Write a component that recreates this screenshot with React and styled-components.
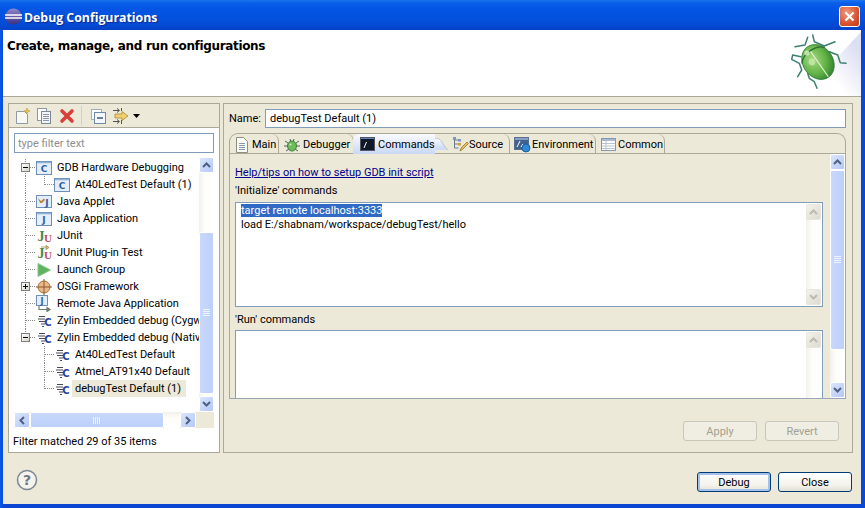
import React from 'react';
import styled, { createGlobalStyle } from 'styled-components';

const Global = createGlobalStyle`
  html, body { margin: 0; padding: 0; background: #0a3fc8; }
  body { font-family: Roboto, "Noto Sans", sans-serif; font-size: 11px; color: #000; }
`;

const Win = styled.div`
  width: 865px;
  height: 508px;
  overflow: hidden;
  display: flex;
  flex-direction: column;
  background: linear-gradient(90deg, #0a5ae8 0, #0a46d2 4px, #0a46d2 861px, #0a4ad8 100%);
`;
const TitleBar = styled.div`
  height: 30px;
  box-sizing: border-box;
  flex: none;
  display: flex;
  align-items: center;
  padding: 3px 5px 0 5px;
  background: linear-gradient(180deg, #1a74f0 0, #0a5fe8 3px, #0456e4 8px, #0350dc 20px, #0342c8 100%);
  color: #fff;
`;
const TitleText = styled.div`
  margin-left: 2px;
  padding-top: 1px;
  font: bold 12.3px "Open Sans", "DejaVu Sans", sans-serif;
  text-shadow: 1px 1px 1px #0a2a90;
  flex: 1;
`;
const CloseBtn = styled.div`
  width: 21px;
  height: 21px;
  box-sizing: border-box;
  border: 1px solid #fff;
  border-radius: 3px;
  background: radial-gradient(circle at 35% 30%, #ee9a80, #d8532f 60%, #bb3a17);
  display: flex;
  align-items: center;
  justify-content: center;
`;
const Body = styled.div`
  flex: 1;
  margin: 0 4px 4px 3px;
  min-height: 0;
  background: #ece9d8;
  display: flex;
  flex-direction: column;
`;
const Header = styled.div`
  height: 66px;
  flex: none;
  background: #fff;
  border-bottom: 1px solid #aca899;
  display: flex;
  justify-content: space-between;
`;
const HeaderText = styled.div`
  font: bold 12px "DejaVu Sans", sans-serif;
  letter-spacing: -0.34px;
  padding: 9px 0 0 4px;
`;
const Panes = styled.div`
  height: 350px;
  flex: none;
  display: flex;
  gap: 3px;
  padding: 6px 8px 0 5px;
`;
const Panel = styled.div`
  box-sizing: border-box;
  border: 1px solid #aca899;
  height: 350px;
  display: flex;
  flex-direction: column;
  width: ${p => p.$w}px;
  background: #ece9d8;
`;
const ToolBar = styled.div`
  height: 23px;
  flex: none;
  background: #ece9d8;
  border-bottom: 1px solid #aca899;
  display: flex;
  align-items: center;
  padding-left: 5px;
  gap: 3px;
`;
const ToolItem = styled.div`
  display: flex;
  align-items: center;
  margin-left: ${p => p.$left || 0}px;
`;
const ToolSep = styled.div`
  width: 1px;
  height: 19px;
  background: #d4d0bf;
  margin: 0 5px 0 3px;
`;
const LeftBody = styled.div`
  flex: 1;
  background: #fff;
  display: flex;
  flex-direction: column;
  padding: 5px 5px 0;
  min-height: 0;
`;
const FilterInput = styled.div`
  height: 20px;
  flex: none;
  box-sizing: border-box;
  border: 1px solid #7f9db9;
  color: #8e8e8e;
  display: flex;
  align-items: center;
  padding-left: 3px;
`;
const TreeWrap = styled.div`
  height: 255px;
  flex: none;
  margin-top: 4px;
  display: flex;
`;
const Tree = styled.div`
  flex: 1;
  min-width: 0;
  overflow: hidden;
  padding-top: 2px;
`;
const Row = styled.div`
  height: 17px;
  display: flex;
  align-items: center;
  white-space: nowrap;
  padding-left: 2px;
`;
const Guide = styled.div`
  width: ${p => p.$w}px;
  height: 17px;
  flex: none;
  position: relative;
  display: flex;
  align-items: center;
  justify-content: center;
  ${p => p.$v && `
    &::before {
      content: '';
      position: absolute;
      left: 9px;
      top: 0;
      height: ${p.$v === 'half' ? '9px' : '17px'};
      border-left: 1px dotted #8a8a8a;
    }
  `}
  ${p => p.$h && `
    &::after {
      content: '';
      position: absolute;
      left: 10px;
      top: 8px;
      width: 9px;
      border-top: 1px dotted #8a8a8a;
    }
  `}
`;
const Expander = styled.div`
  width: 9px;
  height: 9px;
  box-sizing: border-box;
  border: 1px solid #808080;
  background: linear-gradient(135deg, #fff, #d8d4c8);
  position: relative;
  z-index: 1;
  display: flex;
  align-items: center;
  justify-content: center;
  svg { display: block; }
`;
const NodeIcon = styled.div`
  width: 17px;
  height: 17px;
  flex: none;
  display: flex;
  align-items: center;
  justify-content: center;
`;
const NodeLabel = styled.div`
  margin-left: 2px;
  padding: 1px 3px;
  line-height: 13px;
  ${p => p.$selected && 'background: #ece9d8; padding: 2px 5px 2px 3px;'}
`;
const Bar = styled.div`
  flex: ${p => (p.$grow ? 1 : 'none')};
  display: flex;
  flex-direction: ${p => (p.$horizontal ? 'row' : 'column')};
  ${p => (p.$horizontal ? 'height: 16px;' : 'width: 15px;')}
  background: ${p => p.$horizontal
    ? 'linear-gradient(180deg, #f3f1ec, #fdfdfa 40%, #fff)'
    : 'linear-gradient(90deg, #f3f1ec, #fdfdfa 40%, #fff)'};
`;
const BarBtn = styled.div`
  width: ${p => (p.$horizontal ? '16px' : '15px')};
  height: 16px;
  flex: none;
  box-sizing: border-box;
  border: 1px solid ${p => (p.$off ? '#e8e6dc' : '#fff')};
  border-radius: 2px;
  background: ${p => (p.$off ? 'linear-gradient(135deg, #f4f3ec, #dcdad0)' : 'linear-gradient(135deg, #dbe6fd, #b4c8f6)')};
  display: flex;
  align-items: center;
  justify-content: center;
`;
const Thumb = styled.div`
  box-sizing: border-box;
  flex: none;
  border: 1px solid #fff;
  border-radius: 2px;
  ${p => (p.$horizontal ? `width: ${p.$len}px; height: 16px;` : `height: ${p.$len}px; width: 15px;`)}
  background: ${p => p.$horizontal
    ? 'linear-gradient(180deg, #c9d8fc, #bcd0fa)'
    : 'linear-gradient(90deg, #c9d8fc, #bcd0fa)'};
  display: flex;
  align-items: center;
  justify-content: center;
`;
const Track = styled.div`
  flex: ${p => (p.$len ? `0 0 ${p.$len}px` : 1)};
`;
const HBarRow = styled.div`
  height: 16px;
  flex: none;
  background: #ece9d8;
  display: flex;
`;
const HBarFill = styled.div`
  width: ${p => p.$w}px;
  flex: none;
`;
const StatusText = styled.div`
  padding-top: 7px;
  margin-left: -1px;
  line-height: 13px;
`;
const NameRow = styled.div`
  flex: none;
  display: flex;
  align-items: center;
  height: 19px;
  margin: 5px 6px 0 5px;
`;
const NameLabel = styled.div`
  width: 36px;
`;
const NameInput = styled.div`
  flex: 1;
  height: 19px;
  box-sizing: border-box;
  border: 1px solid #7f9db9;
  background: #fff;
  display: flex;
  align-items: center;
  padding-left: 4px;
`;
const Folder = styled.div`
  box-sizing: border-box;
  height: 266px;
  flex: none;
  margin: 5px 6px 0 5px;
  border: 1px solid #aca899;
  border-bottom-color: #9aa6b6;
  border-radius: 9px 9px 0 0;
  display: flex;
  flex-direction: column;
  overflow: hidden;
`;
const TabStrip = styled.div`
  height: 19px;
  flex: none;
  display: flex;
  border-bottom: 1px solid #aca899;
`;
const Tab = styled.div`
  box-sizing: border-box;
  width: ${p => p.$w}px;
  flex: none;
  height: 19px;
  display: flex;
  align-items: center;
  gap: ${p => (p.$gap === undefined ? 3 : p.$gap)}px;
  padding: 2px 0 0 ${p => (p.$pad === undefined ? 5 : p.$pad)}px;
  border-right: 1px solid #aca899;
  border-top-right-radius: 7px;
`;
const ActiveTab = styled.div`
  width: ${p => p.$w}px;
  flex: none;
  height: 20px;
  display: flex;
  align-items: center;
  margin-left: -1px;
`;
const ActiveLabel = styled.div`
  flex: 1;
  height: 20px;
  display: flex;
  align-items: center;
  gap: 3px;
  padding-left: 7px;
  border-top-left-radius: 6px;
  background: linear-gradient(180deg, #fafbfe, #c9d8f5);
`;
const FolderBody = styled.div`
  flex: 1;
  min-height: 0;
  display: flex;
`;
const Commands = styled.div`
  flex: 1;
  min-width: 0;
  padding: 12px 7px 0 5px;
  overflow: hidden;
`;
const HelpLink = styled.div`
  color: #00008b;
  text-decoration: underline;
  line-height: 13px;
`;
const FieldLabel = styled.div`
  margin-top: ${p => p.$top}px;
  line-height: 13px;
  height: 13px;
`;
const TextBox = styled.div`
  box-sizing: border-box;
  margin-top: ${p => p.$top}px;
  height: ${p => p.$h}px;
  border: 1px solid #7f9db9;
  padding: 1px;
  background: #fff;
  display: flex;
  overflow: hidden;
`;
const TextLines = styled.div`
  flex: 1;
  padding-left: 4px;
  line-height: 14px;
`;
const Selected = styled.span`
  background: #316ac5;
  color: #fff;
`;
const ButtonRow = styled.div`
  display: flex;
  justify-content: flex-end;
  gap: 8px;
  padding-right: ${p => p.$right}px;
  margin-top: ${p => p.$top}px;
`;
const Btn = styled.div`
  width: 74px;
  height: 20px;
  box-sizing: border-box;
  border-radius: 3px;
  display: flex;
  align-items: center;
  justify-content: center;
  border: 1px solid ${p => (p.$off ? '#c9c7ba' : '#003c74')};
  color: ${p => (p.$off ? '#a1a192' : '#000')};
  background: ${p => (p.$off ? '#f0eee2' : 'linear-gradient(180deg, #fff, #f3f2ea 70%, #e2dfd2)')};
  ${p => p.$def && 'box-shadow: inset 0 0 0 2px #a6c0ec;'}
`;
const Footer = styled.div`
  flex: 1;
  display: flex;
  align-items: flex-start;
  justify-content: space-between;
  padding: 16px 9px 0 13px;
`;
const FooterBtns = styled.div`
  display: flex;
  gap: 7px;
  padding-top: 3px;
`;

const Up = ({ c = '#4d6185' }) => <svg width="9" height="6" viewBox="0 0 9 6"><path d="M1 5l3.500-3.500L8 5" fill="none" stroke={c} strokeWidth="2" /></svg>;
const Down = ({ c = '#4d6185' }) => <svg width="9" height="6" viewBox="0 0 9 6"><path d="M1 1l3.500 3.500L8 1" fill="none" stroke={c} strokeWidth="2" /></svg>;
const Left = () => <svg width="6" height="9" viewBox="0 0 6 9"><path d="M5 1L1.500 4.500 5 8" fill="none" stroke="#4d6185" strokeWidth="2" /></svg>;
const Right = () => <svg width="6" height="9" viewBox="0 0 6 9"><path d="M1 1l3.500 3.500L1 8" fill="none" stroke="#4d6185" strokeWidth="2" /></svg>;
const GripV = () => <svg width="7" height="8" viewBox="0 0 7 8"><path d="M0 .5h7M0 2.500h7M0 4.500h7M0 6.500h7" stroke="#eef3fe" /></svg>;
const GripH = () => <svg width="8" height="7" viewBox="0 0 8 7"><path d="M.5 0v7M2.500 0v7M4.500 0v7M6.500 0v7" stroke="#eef3fe" /></svg>;

const EclipseIcon = () => (
  <svg width="17" height="17" viewBox="0 0 17 17">
    <defs>
      <linearGradient id="ecl" x1="0" y1="0" x2="0" y2="1">
        <stop offset="0" stopColor="#8f88c8" />
        <stop offset="1" stopColor="#3a2f80" />
      </linearGradient>
    </defs>
    <circle cx="8.500" cy="8.500" r="8" fill="url(#ecl)" />
    <path d="M0 7h17M0 10h17" stroke="#fff" strokeWidth="1.400" />
  </svg>
);

const CfgC = () => (
  <svg width="16" height="16" viewBox="0 0 16 16">
    <rect x=".5" y="1.500" width="15" height="13" fill="#e4eefc" stroke="#6d8fb5" />
    <path d="M1 2.500h14" stroke="#8fb0d4" strokeWidth="1.500" />
    <text x="8" y="12" textAnchor="middle" fontFamily="DejaVu Sans" fontWeight="bold" fontSize="9" fill="#2f5f9e">C</text>
  </svg>
);
const CfgJ = () => (
  <svg width="16" height="16" viewBox="0 0 16 16">
    <rect x=".5" y="1.500" width="15" height="13" fill="#e4eefc" stroke="#6d8fb5" />
    <path d="M1 2.500h14" stroke="#8fb0d4" strokeWidth="1.500" />
    <text x="8" y="12" textAnchor="middle" fontFamily="DejaVu Sans" fontWeight="bold" fontSize="9" fill="#2f5f9e">J</text>
  </svg>
);
const Applet = () => (
  <svg width="16" height="16" viewBox="0 0 16 16">
    <rect x=".5" y="1.500" width="15" height="12" fill="#e4eefc" stroke="#6d8fb5" />
    <path d="M2 4l3 3 3-2.500 1 1.500-3 3H4z" fill="#b8863c" />
    <text x="11" y="12" textAnchor="middle" fontFamily="DejaVu Sans" fontWeight="bold" fontSize="9" fill="#2f5f9e">J</text>
  </svg>
);
const JUnit = ({ plug }) => (
  <svg width="16" height="17" viewBox="0 0 16 17">
    <text x="5" y="14" textAnchor="middle" fontFamily="Liberation Serif" fontWeight="bold" fontSize="14" fill="#3f8b4a">J</text>
    <text x="12" y="15" textAnchor="middle" fontFamily="Liberation Serif" fontWeight="bold" fontSize="11" fill="#c8465a">U</text>
    {plug && <path d="M5 3h5M10 1.500l3 2-3 2z" fill="#e8c76a" stroke="#9a8a50" strokeWidth=".8" />}
  </svg>
);
const Launch = () => (
  <svg width="16" height="16" viewBox="0 0 16 16"><path d="M2 1.500L14.500 8 2 14.500z" fill="#5cb55c" stroke="#8bc28b" /></svg>
);
const Osgi = () => (
  <svg width="16" height="16" viewBox="0 0 16 16">
    <circle cx="8" cy="8" r="6" fill="#e8b888" stroke="#a86d36" />
    <path d="M8 0v16M0 8h16" stroke="#8a5a30" />
  </svg>
);
const Remote = () => (
  <svg width="16" height="17" viewBox="0 0 16 17">
    <rect x=".5" y=".5" width="11" height="10" fill="#e4eefc" stroke="#6d8fb5" />
    <text x="6" y="9" textAnchor="middle" fontFamily="DejaVu Sans" fontWeight="bold" fontSize="8" fill="#2f5f9e">J</text>
    <path d="M3 11v3.500h10M11 12.500l3 2-3 2z" fill="none" stroke="#707a70" strokeWidth="1.200" />
  </svg>
);
const Zylin = () => (
  <svg width="16" height="14" viewBox="0 0 16 14">
    <path d="M3 2.500h6M2 5h7M3 7.500h6M5 10h4M6 12.500h2" stroke="#444a58" />
    <text x="12" y="11.500" textAnchor="middle" fontFamily="DejaVu Sans" fontWeight="bold" fontSize="10" fill="#2c3f9e">C</text>
  </svg>
);

const NewCfg = () => (
  <svg width="18" height="18" viewBox="0 0 18 18">
    <path d="M2.500 4.500h8l3 3v9h-11z" fill="#f8f8f2" stroke="#8f9aa6" />
    <path d="M13 1l.8 2.200L16 4l-2.200.8L13 7l-.8-2.200L10 4l2.200-.8z" fill="#f0c840" stroke="#b09030" strokeWidth=".5" />
  </svg>
);
const Dup = () => (
  <svg width="18" height="18" viewBox="0 0 18 18">
    <rect x="2.500" y="1.500" width="9" height="12" fill="#fff" stroke="#8f9aa6" />
    <rect x="6.500" y="4.500" width="9" height="12" fill="#f2f4f8" stroke="#7d8796" />
    <path d="M8 7.500h6M8 9.500h6M8 11.500h6M8 13.500h6" stroke="#8898b0" />
  </svg>
);
const RedX = () => (
  <svg width="16" height="16" viewBox="0 0 16 16">
    <path d="M3 3l10 10M13 3L3 13" stroke="#d8403c" strokeWidth="3.600" strokeLinecap="round" />
  </svg>
);
const Collapse = () => (
  <svg width="16" height="16" viewBox="0 0 16 16">
    <rect x="1.500" y="1.500" width="10" height="10" fill="#fff" stroke="#9db0c4" />
    <rect x="4.500" y="4.500" width="11" height="11" fill="#f4f7fb" stroke="#6d8aa8" />
    <path d="M7 10h6" stroke="#3a5a80" strokeWidth="1.500" />
  </svg>
);
const FilterIcon = () => (
  <svg width="18" height="18" viewBox="0 0 18 18">
    <path d="M1 3.500h6M5 1.500l2.500 2-2.500 2M1 14.500h6M5 12.500l2.500 2-2.500 2M9.500 1v3M9.500 13v4" stroke="#555" fill="none" />
    <path d="M3 7h7V4.500L16 9l-6 4.500V11H3z" fill="#f0cf70" stroke="#a88a30" strokeWidth=".8" />
  </svg>
);
const MenuCaret = () => (
  <svg width="7" height="4" viewBox="0 0 7 4"><path d="M0 0h7L3.500 4z" fill="#000" /></svg>
);

const PageIcon = () => (
  <svg width="14" height="16" viewBox="0 0 14 16">
    <path d="M1.500.5h7l4 4v11h-11z" fill="#fbfbf6" stroke="#8d8d80" />
    <path d="M4 6.500h6M4 8.500h6M4 10.500h6M4 12.500h6" stroke="#8898b0" />
  </svg>
);
const TinyBug = () => (
  <svg width="16" height="16" viewBox="0 0 16 16">
    <path d="M1 4l3 2M15 4l-3 2M0 9h3M16 9h-3M2 14l3-2M14 14l-3-2M6 2l1 3M10 2L9 5" stroke="#46665a" />
    <ellipse cx="8" cy="9" rx="4.500" ry="5" fill="#6dbb5a" stroke="#3d7d3a" />
    <circle cx="6.500" cy="7.500" r="1" fill="#d6f0c8" />
  </svg>
);
const Term = () => (
  <svg width="15" height="14" viewBox="0 0 15 14">
    <rect x=".5" y=".5" width="14" height="13" fill="#101828" stroke="#556" />
    <path d="M1 1.500h13" stroke="#5d80c0" />
    <path d="M4 11l2.500-6" stroke="#fff" />
  </svg>
);
const SourceIcon = () => (
  <svg width="17" height="17" viewBox="0 0 17 17">
    <path d="M2.500 1v11M2.500 4h4M2.500 8h4M2.500 12h4" stroke="#6a7a90" />
    <rect x="1" y="1" width="3" height="3" fill="#7d97c0" />
    <rect x="6" y="3" width="3" height="2.500" fill="#7d97c0" />
    <rect x="6" y="7" width="3" height="2.500" fill="#c8a050" />
    <path d="M8 15l1-3 6-6 1.500 1.500-6 6z" fill="#e0bd60" stroke="#8a6d20" strokeWidth=".7" />
  </svg>
);
const EnvIcon = () => (
  <svg width="17" height="16" viewBox="0 0 17 16">
    <rect x=".5" y=".5" width="14" height="12" fill="#41618f" stroke="#5b6f8f" />
    <path d="M1 2h13" stroke="#9eb6d8" strokeWidth="1.500" />
    <path d="M3 10l3-6M7 10l2-3" stroke="#fff" />
    <circle cx="12" cy="11" r="4" fill="#2c8ad8" stroke="#1e5f9e" />
  </svg>
);
const TableIcon = () => (
  <svg width="15" height="13" viewBox="0 0 15 13">
    <rect x=".5" y=".5" width="14" height="12" fill="#fff" stroke="#8898ac" />
    <path d="M1 2h13" stroke="#a8bad0" strokeWidth="2" />
    <path d="M1 5.500h13M1 8h13M1 10.500h13M5 3v9" stroke="#b6c4d4" />
  </svg>
);
const TabCurve = () => (
  <svg width="23" height="20" viewBox="0 0 23 20">
    <defs>
      <linearGradient id="tabg" x1="0" y1="0" x2="0" y2="1">
        <stop offset="0" stopColor="#fafbfe" />
        <stop offset="1" stopColor="#c9d8f5" />
      </linearGradient>
    </defs>
    <path d="M0 0h3C9 0 11 5 14 10s5 9 9 10H0z" fill="url(#tabg)" />
    <path d="M0 .5h3C9 .5 11 5 14 10s5 9 9 9.500" fill="none" stroke="#9fa7b8" />
  </svg>
);

const Beetle = () => (
  <svg width="71" height="66" viewBox="789 30 71 66">
    <defs>
      <linearGradient id="corner" x1="0.3" y1="0.9" x2="1" y2="0.3">
        <stop offset="0.3" stopColor="#fff" />
        <stop offset="1" stopColor="#dcdef2" />
      </linearGradient>
      <radialGradient id="shell" cx="0.4" cy="0.35" r="0.8">
        <stop offset="0" stopColor="#a8d884" />
        <stop offset="0.55" stopColor="#5fb144" />
        <stop offset="1" stopColor="#1f6a2c" />
      </radialGradient>
    </defs>
    <path d="M860 32V96H800z" fill="url(#corner)" />
    <g fill="none" stroke="#3d7f70" strokeWidth="1.500" strokeLinejoin="round" strokeLinecap="round">
      <path d="M811.700 35l1.600 6.700 10 4.300 10.700-4.300" />
      <path d="M806.700 37.300L804 45l-10 1.700" />
      <path d="M828.300 51.700l8.400 3.300 2.600 7.700 5.700.6" />
      <path d="M800 56.700l-8.300-1.700-1 4.300 7.600 4 2.400 6.700-4 6.700" />
      <path d="M806.700 73.300l1.600 5 5 3.400 2.700 6.600" />
    </g>
    <g transform="rotate(-35 817 62)">
      <ellipse cx="817" cy="62" rx="15" ry="18.500" fill="url(#shell)" stroke="#2f7f38" strokeWidth=".8" />
      <path d="M817 49v31" stroke="#dff3cc" strokeWidth="1.200" />
      <path d="M803 54a16 11 0 0 1 28 0" fill="none" stroke="#2c6e34" strokeWidth="1.400" />
    </g>
    <circle cx="806" cy="53" r="2.600" fill="#d8f2c2" opacity=".8" />
    <circle cx="811" cy="62" r="3.400" fill="#cdeeb4" opacity=".7" />
  </svg>
);

const HelpIcon = () => (
  <svg width="22" height="22" viewBox="0 0 22 22">
    <circle cx="11" cy="11" r="9.500" fill="#f4f3ec" stroke="#7f8a96" strokeWidth="1.600" />
    <text x="11" y="16" textAnchor="middle" fontFamily="DejaVu Sans" fontWeight="bold" fontSize="14" fill="#6d7884">?</text>
  </svg>
);

const treeRows = [
  { label: 'GDB Hardware Debugging', icon: <CfgC />, g: [{ v: 'full', exp: 'minus', h: true }] },
  { label: 'At40LedTest Default (1)', icon: <CfgC />, g: [{ v: 'full' }, { v: 'half', h: true }] },
  { label: 'Java Applet', icon: <Applet />, g: [{ v: 'full', h: true }] },
  { label: 'Java Application', icon: <CfgJ />, g: [{ v: 'full', h: true }] },
  { label: 'JUnit', icon: <JUnit />, g: [{ v: 'full', h: true }] },
  { label: 'JUnit Plug-in Test', icon: <JUnit plug />, g: [{ v: 'full', h: true }] },
  { label: 'Launch Group', icon: <Launch />, g: [{ v: 'full', h: true }] },
  { label: 'OSGi Framework', icon: <Osgi />, g: [{ v: 'full', exp: 'plus', h: true }] },
  { label: 'Remote Java Application', icon: <Remote />, g: [{ v: 'full', h: true }] },
  { label: 'Zylin Embedded debug (Cygwin)', icon: <Zylin />, g: [{ v: 'full', h: true }] },
  { label: 'Zylin Embedded debug (Native)', icon: <Zylin />, g: [{ v: 'half', exp: 'minus', h: true }] },
  { label: 'At40LedTest Default', icon: <Zylin />, g: [{}, { v: 'full', h: true }] },
  { label: 'Atmel_AT91x40 Default', icon: <Zylin />, g: [{}, { v: 'full', h: true }] },
  { label: 'debugTest Default (1)', icon: <Zylin />, g: [{}, { v: 'half', h: true }], selected: true },
];

const VScroll = ({ before, len, off }) => (
  <Bar>
    <BarBtn $off={off}><Up c={off ? '#bdbbaf' : undefined} /></BarBtn>
    {before > 0 && <Track $len={before} />}
    {len > 0 && <Thumb $len={len}><GripV /></Thumb>}
    <Track />
    <BarBtn $off={off}><Down c={off ? '#bdbbaf' : undefined} /></BarBtn>
  </Bar>
);

export default function App() {
  return (
    <Win>
      <Global />
      <TitleBar>
        <EclipseIcon />
        <TitleText>Debug Configurations</TitleText>
        <CloseBtn>
          <svg width="11" height="11" viewBox="0 0 11 11"><path d="M1.500 1.500l8 8M9.500 1.500l-8 8" stroke="#fff" strokeWidth="2.200" /></svg>
        </CloseBtn>
      </TitleBar>
      <Body>
        <Header>
          <HeaderText>Create, manage, and run configurations</HeaderText>
          <Beetle />
        </Header>
        <Panes>
          <Panel $w={212}>
            <ToolBar>
              <NewCfg />
              <Dup />
              <ToolItem $left={3}><RedX /></ToolItem>
              <ToolSep />
              <Collapse />
              <ToolItem $left={3}><FilterIcon /></ToolItem>
              <MenuCaret />
            </ToolBar>
            <LeftBody>
              <FilterInput>type filter text</FilterInput>
              <TreeWrap>
                <Tree>
                  {treeRows.map(r => (
                    <Row key={r.label}>
                      {r.g.map((g, i) => (
                        <Guide key={i} $w={i === 0 ? 19 : 18} $v={g.v} $h={g.h}>
                          {g.exp && (
                            <Expander>
                              <svg width="5" height="5" viewBox="0 0 5 5">
                                <path d={g.exp === 'plus' ? 'M0 2.500h5M2.500 0v5' : 'M0 2.500h5'} stroke="#000" />
                              </svg>
                            </Expander>
                          )}
                        </Guide>
                      ))}
                      <NodeIcon>{r.icon}</NodeIcon>
                      <NodeLabel $selected={r.selected}>{r.label}</NodeLabel>
                    </Row>
                  ))}
                </Tree>
                <VScroll before={59} len={162} />
              </TreeWrap>
              <HBarRow>
                <BarBtn $horizontal><Left /></BarBtn>
                <Thumb $horizontal $len={134}><GripH /></Thumb>
                <Bar $horizontal $grow />
                <BarBtn $horizontal><Right /></BarBtn>
                <HBarFill $w={18} />
              </HBarRow>
              <StatusText>Filter matched 29 of 35 items</StatusText>
            </LeftBody>
          </Panel>
          <Panel $w={630}>
            <NameRow>
              <NameLabel>Name:</NameLabel>
              <NameInput>debugTest Default (1)</NameInput>
            </NameRow>
            <Folder>
              <TabStrip>
                <Tab $w={49}><PageIcon />Main</Tab>
                <Tab $w={75}><TinyBug />Debugger</Tab>
                <ActiveTab $w={95}>
                  <ActiveLabel><Term />Commands</ActiveLabel>
                  <TabCurve />
                </ActiveTab>
                <Tab $w={62} $gap={0} $pad={4}><SourceIcon />Source</Tab>
                <Tab $w={86} $gap={1} $pad={4}><EnvIcon />Environment</Tab>
                <Tab $w={69} $gap={2}><TableIcon />Common</Tab>
              </TabStrip>
              <FolderBody>
                <Commands>
                  <HelpLink>Help/tips on how to setup GDB init script</HelpLink>
                  <FieldLabel $top={5}>'Initialize' commands</FieldLabel>
                  <TextBox $top={5} $h={105}>
                    <TextLines>
                      <div><Selected>target remote localhost:3333</Selected></div>
                      <div>load E:/shabnam/workspace/debugTest/hello</div>
                    </TextLines>
                    <VScroll off />
                  </TextBox>
                  <FieldLabel $top={6}>'Run' commands</FieldLabel>
                  <TextBox $top={4} $h={100}>
                    <TextLines />
                    <VScroll off />
                  </TextBox>
                </Commands>
                <VScroll before={0} len={180} />
              </FolderBody>
            </Folder>
            <ButtonRow $right={13} $top={22}>
              <Btn $off>Apply</Btn>
              <Btn $off>Revert</Btn>
            </ButtonRow>
          </Panel>
        </Panes>
        <Footer>
          <HelpIcon />
          <FooterBtns>
            <Btn $def>Debug</Btn>
            <Btn>Close</Btn>
          </FooterBtns>
        </Footer>
      </Body>
    </Win>
  );
}
